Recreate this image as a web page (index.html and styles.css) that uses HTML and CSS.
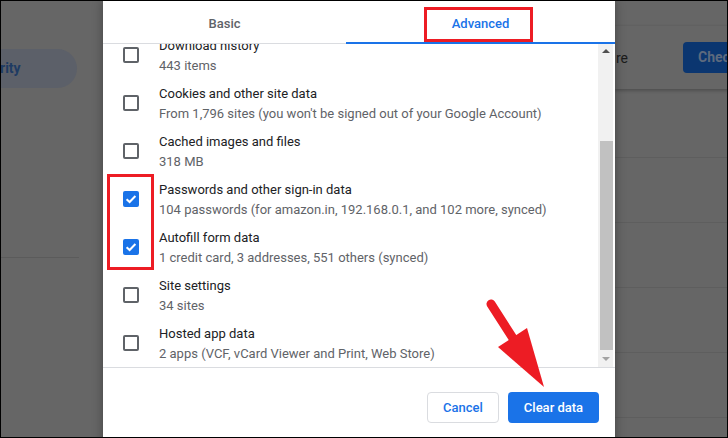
FILE: index.html
```html
<!DOCTYPE html>
<html>
<head>
<meta charset="utf-8">
<link rel="stylesheet" href="styles.css">
</head>
<body>
<div class="frame">
  <div class="bg-left">
    <div class="pill">rity</div>
    <div class="left-line"></div>
  </div>

  <div class="dialog">
    <div class="tabs">
      <div class="tab">Basic</div>
      <div class="tab active">Advanced</div>
    </div>
    <div class="body">
      <div class="list">
        <div class="items">
          <div class="item">
            <span class="cb"></span>
            <div class="txt"><div class="t">Download history</div><div class="s">443 items</div></div>
          </div>
          <div class="item">
            <span class="cb"></span>
            <div class="txt"><div class="t">Cookies and other site data</div><div class="s">From 1,796 sites (you won't be signed out of your Google Account)</div></div>
          </div>
          <div class="item">
            <span class="cb"></span>
            <div class="txt"><div class="t">Cached images and files</div><div class="s">318 MB</div></div>
          </div>
          <div class="item">
            <span class="cb on"><svg viewBox="0 0 16 16" width="16" height="16"><path d="M3.6 8.2 L6.6 11 L12.4 5" fill="none" stroke="#fff" stroke-width="2"/></svg></span>
            <div class="txt"><div class="t">Passwords and other sign-in data</div><div class="s">104 passwords (for amazon.in, 192.168.0.1, and 102 more, synced)</div></div>
          </div>
          <div class="item">
            <span class="cb on"><svg viewBox="0 0 16 16" width="16" height="16"><path d="M3.6 8.2 L6.6 11 L12.4 5" fill="none" stroke="#fff" stroke-width="2"/></svg></span>
            <div class="txt"><div class="t">Autofill form data</div><div class="s">1 credit card, 3 addresses, 551 others (synced)</div></div>
          </div>
          <div class="item">
            <span class="cb"></span>
            <div class="txt"><div class="t">Site settings</div><div class="s">34 sites</div></div>
          </div>
          <div class="item">
            <span class="cb"></span>
            <div class="txt"><div class="t">Hosted app data</div><div class="s">2 apps (VCF, vCard Viewer and Print, Web Store)</div></div>
          </div>
        </div>
      </div>
      <div class="scrollbar">
        <div class="sb-btn"><span class="tri up"></span></div>
        <div class="thumb"></div>
        <div class="sb-btn bottom"><span class="tri down"></span></div>
      </div>
    </div>
    <div class="footer">
      <button class="btn cancel">Cancel</button>
      <button class="btn primary">Clear data</button>
    </div>
  </div>

  <div class="bg-right">
    <div class="card">
      <span class="card-text">re</span>
      <span class="card-btn">Chec</span>
    </div>
    <div class="rows">
      <div class="row"></div>
      <div class="row"></div>
      <div class="row"></div>
      <div class="row"></div>
      <div class="row"></div>
    </div>
  </div>

  <div class="mark mark-tab"></div>
  <div class="mark mark-cb"></div>
  <svg class="arrow" width="728" height="438" viewBox="0 0 728 438">
    <line x1="491" y1="304" x2="516" y2="343" stroke="#ed1c24" stroke-width="9" stroke-linecap="round"/>
    <polygon points="498,347 527,328 544,387" fill="#ed1c24"/>
  </svg>
</div>
</body>
</html>
```

FILE: styles.css
```css
* { box-sizing: border-box; }
html, body { margin: 0; padding: 0; }
body {
  width: 728px;
  height: 438px;
  overflow: hidden;
  font-family: Roboto, "Liberation Sans", Arial, sans-serif;
  background: #666;
}
.frame {
  position: relative;
  width: 728px;
  height: 438px;
  border: 1px solid #000;
  display: grid;
  grid-template-columns: 102px 512px 1fr;
  overflow: hidden;
  background: #666;
}

/* left background */
.bg-left { display: flex; flex-direction: column; }
.pill {
  margin-top: 48px;
  width: 76px;
  height: 39px;
  border-radius: 0 20px 20px 0;
  background: #5c6069;
  color: #1e3b63;
  font-weight: 700;
  font-size: 14px;
  line-height: 39px;
  padding-left: 0;
  text-indent: -1px;
}
.left-line {
  margin-top: 169px;
  width: 78px;
  height: 1px;
  background: #5b5b5b;
}

/* dialog */
.dialog {
  background: #fff;
  display: flex;
  flex-direction: column;
  box-shadow: 0 0 10px rgba(0,0,0,0.35);
  z-index: 1;
}
.tabs {
  height: 43px;
  display: grid;
  grid-template-columns: 243px 1fr;
}
.tab {
  display: flex;
  align-items: center;
  justify-content: center;
  font-size: 13px;
  font-weight: 500;
  color: #5f6368;
  border-bottom: 1px solid #dadce0;
  padding-top: 3px;
}
.tab.active {
  color: #1a73e8;
  border-bottom: 2px solid #1a73e8;
  padding-top: 4px;
}
.body {
  height: 323px;
  display: flex;
  padding-right: 2px;
}
.list {
  flex: 1;
  overflow: hidden;
}
.items { margin-top: -13px; }
.item {
  height: 48px;
  display: flex;
  align-items: center;
  padding: 4px 0 4px 20px;
}
.cb {
  width: 16px;
  height: 16px;
  border: 2px solid #5f6368;
  border-radius: 2px;
  flex: none;
  display: block;
}
.cb.on {
  border: none;
  background: #1a73e8;
}
.cb svg { display: block; }
.txt { margin-left: 20px; font-size: 13px; line-height: 20px; white-space: nowrap; padding-top: 2px; }
.t { color: #202124; }
.s { color: #5f6368; }

.scrollbar {
  width: 15px;
  background: #f1f1f1;
  display: flex;
  flex-direction: column;
}
.sb-btn {
  height: 15px;
  display: flex;
  align-items: center;
  justify-content: center;
}
.sb-btn.bottom { margin-top: auto; }
.tri { width: 0; height: 0; border-left: 4px solid transparent; border-right: 4px solid transparent; }
.tri.up { border-bottom: 4px solid #505050; margin-top: -1px; }
.tri.down { border-top: 4px solid #a3a3a3; margin-top: -2px; }
.thumb {
  margin-top: 82px;
  margin-left: 2px;
  height: 209px;
  background: #c1c1c1;
}

.footer {
  border-top: 1px solid #dadce0;
  display: flex;
  justify-content: flex-end;
  gap: 9px;
  padding: 24px 16px 0 0;
  flex: 1;
}
.btn {
  height: 31px;
  border-radius: 4px;
  font-family: Roboto, "Liberation Sans", Arial, sans-serif;
  font-size: 13px;
  font-weight: 500;
  padding: 0;
  cursor: pointer;
}
.cancel {
  width: 72px;
  background: #fff;
  color: #1a73e8;
  border: 1px solid #dadce0;
}
.primary {
  width: 91px;
  background: #1a73e8;
  color: #fff;
  border: none;
}

/* right background */
.bg-right { display: flex; flex-direction: column; }
.card {
  margin-top: 24px;
  height: 64px;
  border-top: 1px solid #616161;
  background: #666;
  box-shadow: 0 2px 3px rgba(0,0,0,0.22);
  display: flex;
  align-items: center;
  padding-left: 1px;
}
.card-text {
  color: #1b1b1b;
  font-size: 14px;
  width: 67px;
}
.card-btn {
  height: 31px;
  padding: 0 14px 0 15px;
  border-radius: 4px 0 0 4px;
  background: #0b3670;
  color: #5d6a7e;
  font-weight: 700;
  font-size: 14px;
  line-height: 31px;
  flex: 1;
  white-space: nowrap;
  overflow: hidden;
}
.rows { margin-top: 68px; }
.row {
  height: 65px;
  border-top: 1px solid #5e5e5e;
}

/* annotations */
.mark {
  position: absolute;
  border: 3px solid #ed1c24;
  z-index: 3;
}
.mark-tab { left: 423px; top: 6px; width: 109px; height: 35px; }
.mark-cb { left: 106px; top: 173px; width: 47px; height: 96px; }
.arrow { position: absolute; left: -1px; top: -1px; z-index: 3; }
```
